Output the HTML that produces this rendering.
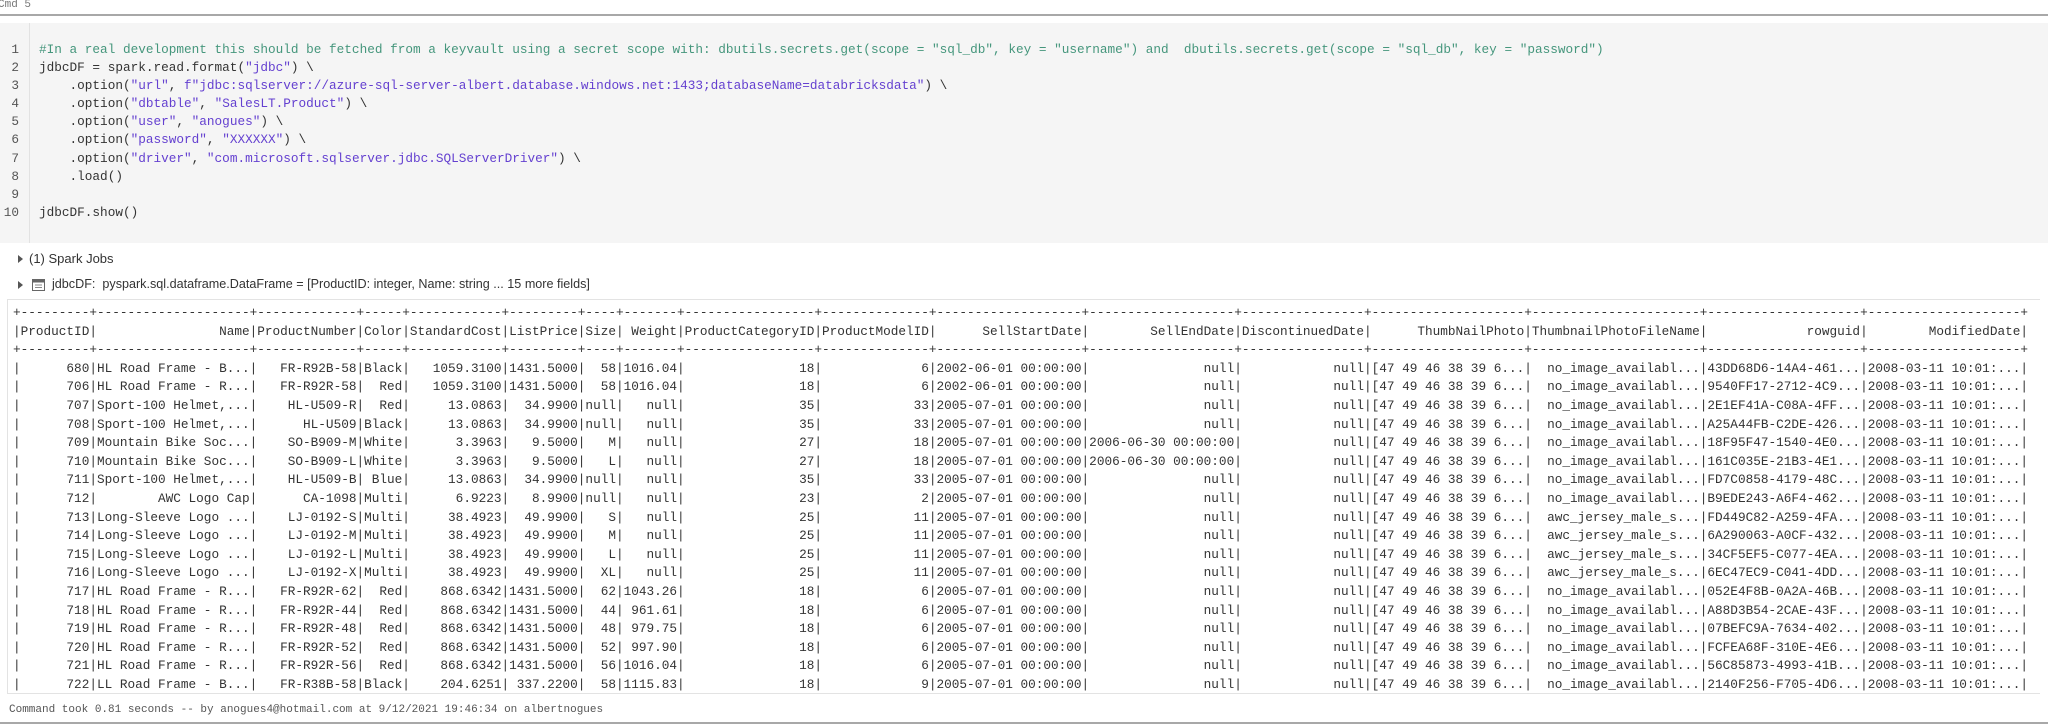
<!DOCTYPE html>
<html><head><meta charset="utf-8"><style>
html,body{margin:0;padding:0;background:#fff;width:2048px;height:726px;overflow:hidden;position:relative}
.mono{font-family:"Liberation Mono",monospace}
#cmd{position:absolute;left:-2px;top:-1px;font:11px "Liberation Mono",monospace;color:#777}
#topline{position:absolute;left:0;top:14px;width:2048px;height:2px;background:#a8a8a8}
#code{position:absolute;left:0;top:23px;width:2048px;height:220px;background:#f5f5f5}
#gut{position:absolute;left:29px;top:0;width:1px;height:220px;background:#e2e2e2}
#nums{position:absolute;left:0;top:18px;width:19px;text-align:right;font:12.73px/18.1px "Liberation Mono",monospace;color:#555;white-space:pre}
#src{position:absolute;left:39px;top:18px;font:12.73px/18.1px "Liberation Mono",monospace;color:#333;white-space:pre}
.c{color:#45967c}.s{color:#6440d0}
.sans{font-family:"Liberation Sans",sans-serif;color:#333;position:absolute;white-space:pre}
.tri{position:absolute;width:0;height:0;border-top:4px solid transparent;border-bottom:4px solid transparent;border-left:5px solid #555}
#tbl{position:absolute;left:7px;top:299px;width:2032px;height:393px;border:1px solid #e3e3e3;border-right:none;overflow:hidden}
#tbl pre{margin:0;position:absolute;left:5px;top:4px;font:12.73px/18.6px "Liberation Mono",monospace;color:#333}
#took{position:absolute;left:9px;top:704px;font:11px "Liberation Mono",monospace;color:#555;white-space:pre}
#botline{position:absolute;left:0;top:722px;width:2048px;height:2px;background:#a8a8a8}
</style></head><body>
<div id="cmd">Cmd 5</div>
<div id="topline"></div>
<div id="code"><div id="gut"></div>
<div id="nums">1
2
3
4
5
6
7
8
9
10</div>
<div id="src"><span class="c">#In a real development this should be fetched from a keyvault using a secret scope with: dbutils.secrets.get(scope = "sql_db", key = "username") and  dbutils.secrets.get(scope = "sql_db", key = "password")</span>
jdbcDF = spark.read.format(<span class="s">"jdbc"</span>) \
    .option(<span class="s">"url"</span>, <span class="s">f"jdbc:sqlserver://azure-sql-server-albert.database.windows.net:1433;databaseName=databricksdata"</span>) \
    .option(<span class="s">"dbtable"</span>, <span class="s">"SalesLT.Product"</span>) \
    .option(<span class="s">"user"</span>, <span class="s">"anogues"</span>) \
    .option(<span class="s">"password"</span>, <span class="s">"XXXXXX"</span>) \
    .option(<span class="s">"driver"</span>, <span class="s">"com.microsoft.sqlserver.jdbc.SQLServerDriver"</span>) \
    .load()

jdbcDF.show()</div>
</div>
<div class="tri" style="left:18px;top:255px"></div>
<div class="sans" style="left:29px;top:251px;font-size:13px">(1) Spark Jobs</div>
<div class="tri" style="left:18px;top:281px"></div>
<svg style="position:absolute;left:32px;top:279px" width="13" height="12" viewBox="0 0 13 12"><rect x="0.5" y="0.5" width="12" height="11" fill="#fff" stroke="#666"/><rect x="0.5" y="0.5" width="12" height="3" fill="#666"/><line x1="3" y1="6" x2="10" y2="6" stroke="#888"/><line x1="3" y1="8.5" x2="10" y2="8.5" stroke="#888"/></svg>
<div class="sans" style="left:52px;top:277px;font-size:12.6px">jdbcDF:  pyspark.sql.dataframe.DataFrame = [ProductID: integer, Name: string ... 15 more fields]</div>
<div id="tbl"><pre>+---------+--------------------+-------------+-----+------------+---------+----+-------+-----------------+--------------+-------------------+-------------------+----------------+--------------------+----------------------+--------------------+--------------------+
|ProductID|                Name|ProductNumber|Color|StandardCost|ListPrice|Size| Weight|ProductCategoryID|ProductModelID|      SellStartDate|        SellEndDate|DiscontinuedDate|      ThumbNailPhoto|ThumbnailPhotoFileName|             rowguid|        ModifiedDate|
+---------+--------------------+-------------+-----+------------+---------+----+-------+-----------------+--------------+-------------------+-------------------+----------------+--------------------+----------------------+--------------------+--------------------+
|      680|HL Road Frame - B...|   FR-R92B-58|Black|   1059.3100|1431.5000|  58|1016.04|               18|             6|2002-06-01 00:00:00|               null|            null|[47 49 46 38 39 6...|  no_image_availabl...|43DD68D6-14A4-461...|2008-03-11 10:01:...|
|      706|HL Road Frame - R...|   FR-R92R-58|  Red|   1059.3100|1431.5000|  58|1016.04|               18|             6|2002-06-01 00:00:00|               null|            null|[47 49 46 38 39 6...|  no_image_availabl...|9540FF17-2712-4C9...|2008-03-11 10:01:...|
|      707|Sport-100 Helmet,...|    HL-U509-R|  Red|     13.0863|  34.9900|null|   null|               35|            33|2005-07-01 00:00:00|               null|            null|[47 49 46 38 39 6...|  no_image_availabl...|2E1EF41A-C08A-4FF...|2008-03-11 10:01:...|
|      708|Sport-100 Helmet,...|      HL-U509|Black|     13.0863|  34.9900|null|   null|               35|            33|2005-07-01 00:00:00|               null|            null|[47 49 46 38 39 6...|  no_image_availabl...|A25A44FB-C2DE-426...|2008-03-11 10:01:...|
|      709|Mountain Bike Soc...|    SO-B909-M|White|      3.3963|   9.5000|   M|   null|               27|            18|2005-07-01 00:00:00|2006-06-30 00:00:00|            null|[47 49 46 38 39 6...|  no_image_availabl...|18F95F47-1540-4E0...|2008-03-11 10:01:...|
|      710|Mountain Bike Soc...|    SO-B909-L|White|      3.3963|   9.5000|   L|   null|               27|            18|2005-07-01 00:00:00|2006-06-30 00:00:00|            null|[47 49 46 38 39 6...|  no_image_availabl...|161C035E-21B3-4E1...|2008-03-11 10:01:...|
|      711|Sport-100 Helmet,...|    HL-U509-B| Blue|     13.0863|  34.9900|null|   null|               35|            33|2005-07-01 00:00:00|               null|            null|[47 49 46 38 39 6...|  no_image_availabl...|FD7C0858-4179-48C...|2008-03-11 10:01:...|
|      712|        AWC Logo Cap|      CA-1098|Multi|      6.9223|   8.9900|null|   null|               23|             2|2005-07-01 00:00:00|               null|            null|[47 49 46 38 39 6...|  no_image_availabl...|B9EDE243-A6F4-462...|2008-03-11 10:01:...|
|      713|Long-Sleeve Logo ...|    LJ-0192-S|Multi|     38.4923|  49.9900|   S|   null|               25|            11|2005-07-01 00:00:00|               null|            null|[47 49 46 38 39 6...|  awc_jersey_male_s...|FD449C82-A259-4FA...|2008-03-11 10:01:...|
|      714|Long-Sleeve Logo ...|    LJ-0192-M|Multi|     38.4923|  49.9900|   M|   null|               25|            11|2005-07-01 00:00:00|               null|            null|[47 49 46 38 39 6...|  awc_jersey_male_s...|6A290063-A0CF-432...|2008-03-11 10:01:...|
|      715|Long-Sleeve Logo ...|    LJ-0192-L|Multi|     38.4923|  49.9900|   L|   null|               25|            11|2005-07-01 00:00:00|               null|            null|[47 49 46 38 39 6...|  awc_jersey_male_s...|34CF5EF5-C077-4EA...|2008-03-11 10:01:...|
|      716|Long-Sleeve Logo ...|    LJ-0192-X|Multi|     38.4923|  49.9900|  XL|   null|               25|            11|2005-07-01 00:00:00|               null|            null|[47 49 46 38 39 6...|  awc_jersey_male_s...|6EC47EC9-C041-4DD...|2008-03-11 10:01:...|
|      717|HL Road Frame - R...|   FR-R92R-62|  Red|    868.6342|1431.5000|  62|1043.26|               18|             6|2005-07-01 00:00:00|               null|            null|[47 49 46 38 39 6...|  no_image_availabl...|052E4F8B-0A2A-46B...|2008-03-11 10:01:...|
|      718|HL Road Frame - R...|   FR-R92R-44|  Red|    868.6342|1431.5000|  44| 961.61|               18|             6|2005-07-01 00:00:00|               null|            null|[47 49 46 38 39 6...|  no_image_availabl...|A88D3B54-2CAE-43F...|2008-03-11 10:01:...|
|      719|HL Road Frame - R...|   FR-R92R-48|  Red|    868.6342|1431.5000|  48| 979.75|               18|             6|2005-07-01 00:00:00|               null|            null|[47 49 46 38 39 6...|  no_image_availabl...|07BEFC9A-7634-402...|2008-03-11 10:01:...|
|      720|HL Road Frame - R...|   FR-R92R-52|  Red|    868.6342|1431.5000|  52| 997.90|               18|             6|2005-07-01 00:00:00|               null|            null|[47 49 46 38 39 6...|  no_image_availabl...|FCFEA68F-310E-4E6...|2008-03-11 10:01:...|
|      721|HL Road Frame - R...|   FR-R92R-56|  Red|    868.6342|1431.5000|  56|1016.04|               18|             6|2005-07-01 00:00:00|               null|            null|[47 49 46 38 39 6...|  no_image_availabl...|56C85873-4993-41B...|2008-03-11 10:01:...|
|      722|LL Road Frame - B...|   FR-R38B-58|Black|    204.6251| 337.2200|  58|1115.83|               18|             9|2005-07-01 00:00:00|               null|            null|[47 49 46 38 39 6...|  no_image_availabl...|2140F256-F705-4D6...|2008-03-11 10:01:...|
</pre></div>
<div id="took">Command took 0.81 seconds -- by anogues4@hotmail.com at 9/12/2021 19:46:34 on albertnogues</div>
<div id="botline"></div>
</body></html>
